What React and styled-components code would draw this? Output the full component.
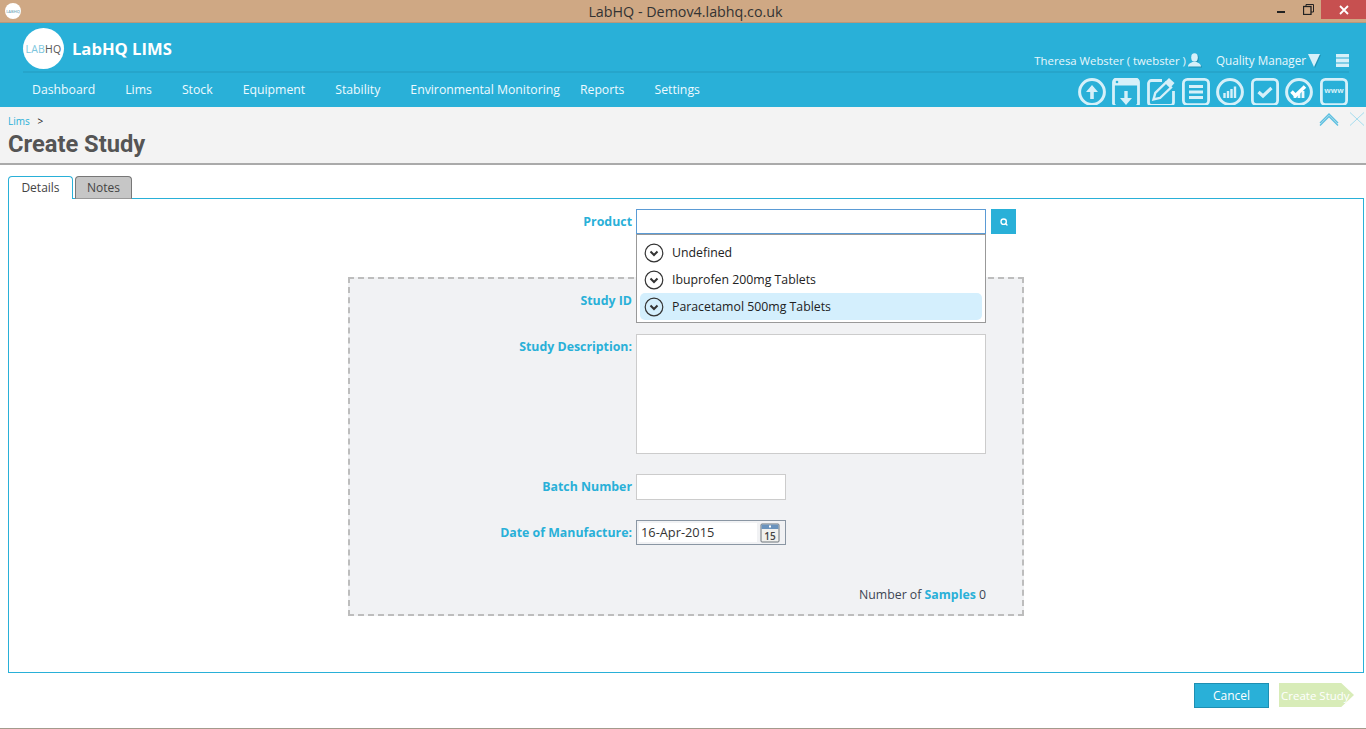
import React from "react";
import styled, { createGlobalStyle } from "styled-components";
import { LuSearch } from "react-icons/lu";

const Global = createGlobalStyle`
  html, body { margin: 0; padding: 0; background: #fff; }
  body { font-family: "Open Sans", "Noto Sans", sans-serif; font-size: 12.5px; color: #333; overflow: hidden; }
  * { box-sizing: border-box; }
`;

const NAV = ["Dashboard", "Lims", "Stock", "Equipment", "Stability", "Environmental Monitoring", "Reports", "Settings"];
const PRODUCTS = ["Undefined", "Ibuprofen 200mg Tablets", "Paracetamol 500mg Tablets"];
const BLUE = "#29b0d8";
const ICON = "#d6f0f9";

/* toolbar drawings */
const UpIcon = () => (
  <svg width="28" height="28" viewBox="0 0 28 28" fill="none" stroke={ICON}>
    <circle cx="14" cy="14" r="12.4" strokeWidth="3" />
    <path d="M14 21v-12" strokeWidth="3.600" />
    <path d="M8 14l6-7 6 7z" fill={ICON} stroke="none" />
  </svg>
);
const DownloadIcon = () => (
  <svg width="28" height="28" viewBox="0 0 28 28" fill="none" stroke={ICON}>
    <path d="M1.500 26V4a3 3 0 0 1 3-3h19a3 3 0 0 1 3 3v22a3 3 0 0 1-2 2M3.500 28a3 3 0 0 1-2-2" strokeWidth="2.800" />
    <path d="M2 2h24v5.500H2z" fill={ICON} stroke="none" />
    <circle cx="5" cy="4" r="1.300" fill={BLUE} stroke="none" />
    <path d="M14 13v9" strokeWidth="3.400" />
    <path d="M8 20h12l-6 7z" fill={ICON} stroke="none" />
  </svg>
);
const EditIcon = () => (
  <svg width="28" height="28" viewBox="0 0 28 28" fill="none" stroke={ICON}>
    <path d="M15 2.500H4.500a3 3 0 0 0-3 3v19a3 3 0 0 0 3 3h19a3 3 0 0 0 3-3V13" strokeWidth="2.800" />
    <path d="M6.500 21.500l1.800-6.500L19 4.500l5 5L13 20z" strokeWidth="2.400" />
    <path d="M18 4l5.500 5.500 4-4.500L22 0z" fill={ICON} stroke="none" />
  </svg>
);
const ListIcon = () => (
  <svg width="28" height="28" viewBox="0 0 28 28" fill="none" stroke={ICON}>
    <rect x="1.400" y="1.400" width="25.200" height="25.200" rx="4" strokeWidth="2.800" />
    <path d="M7 8.500h14M7 14h14M7 19.500h14" strokeWidth="2.800" />
  </svg>
);
const ChartIcon = () => (
  <svg width="28" height="28" viewBox="0 0 28 28" fill="none" stroke={ICON}>
    <circle cx="14" cy="14" r="12.400" strokeWidth="3" />
    <path d="M8.500 20v-5M12 20v-7M15.500 20v-9M19 20V8.500" strokeWidth="2.400" />
  </svg>
);
const CheckIcon = () => (
  <svg width="28" height="28" viewBox="0 0 28 28" fill="none" stroke={ICON}>
    <rect x="1.400" y="1.400" width="25.200" height="25.200" rx="4" strokeWidth="2.800" />
    <path d="M7.500 14l4.500 4 8.500-8" strokeWidth="3.200" />
  </svg>
);
const ChartCheckIcon = () => (
  <svg width="28" height="28" viewBox="0 0 28 28" fill="none" stroke={ICON}>
    <circle cx="14" cy="14" r="12.400" strokeWidth="3" />
    <path d="M10 20v-5M14 20v-5M18 20v-7" stroke="#eef9fd" strokeWidth="2.800" />
    <path d="M6.500 13.500l4 4 9.500-9" stroke="#fff" strokeWidth="3.600" />
  </svg>
);
const WwwIcon = () => (
  <svg width="28" height="28" viewBox="0 0 28 28" fill="none" stroke={ICON}>
    <rect x="1.400" y="1.400" width="25.200" height="25.200" rx="4" strokeWidth="2.800" />
    <text x="14" y="14.500" textAnchor="middle" fontSize="7.500" fontWeight="700" fontFamily="Open Sans" fill={ICON} stroke="none">www</text>
  </svg>
);
const TOOLS = [UpIcon, DownloadIcon, EditIcon, ListIcon, ChartIcon, CheckIcon, ChartCheckIcon, WwwIcon];

const Chevron = () => (
  <svg width="20" height="20" viewBox="0 0 20 20" fill="none" stroke="#333">
    <circle cx="10" cy="10" r="8.800" strokeWidth="1.200" />
    <path d="M6.500 8.500 10 12l3.500-3.500" strokeWidth="2" />
  </svg>
);

const Calendar = () => (
  <svg width="20" height="20" viewBox="0 0 20 20">
    <rect x="1" y="1" width="18" height="18" rx="1" fill="#f1f1ee" stroke="#6d747b" />
    <rect x="1.500" y="1.500" width="17" height="4.500" fill="#6a93bd" />
    <rect x="9" y="2.500" width="2" height="2" fill="#fff" />
    <text x="10" y="16.500" textAnchor="middle" fontSize="10" fontWeight="600" fontFamily="Open Sans" fill="#444">15</text>
  </svg>
);

const Person = () => (
  <svg width="13" height="14" viewBox="0 0 13 14" fill={ICON}>
    <ellipse cx="6.500" cy="4.500" rx="3.300" ry="4.200" />
    <path d="M0 13.500c0-3 3-3.500 4.500-4.500h4c1.500 1 4.500 1.500 4.500 4.500z" />
  </svg>
);

const TitleBar = styled.div`
  height: 23px;
  flex: none;
  background: #cfa884;
  border-bottom: 1px solid #b8977a;
  display: grid;
  grid-template-columns: 1fr auto 1fr;
  align-items: center;
  color: #333;
  font-size: 14.3px;
  padding-left: 5px;
`;

const AppBadge = styled.div`
  width: 16px;
  height: 16px;
  border-radius: 50%;
  background: #fff;
  color: #7ab;
  font-size: 4px;
  font-weight: 600;
  display: flex;
  align-items: center;
  justify-content: center;
`;

const WindowButtons = styled.div`
  justify-self: end;
  align-self: start;
  display: flex;
  align-items: flex-start;
`;

const WinButton = styled.div`
  width: ${(p) => p.$w}px;
  height: 19px;
  display: flex;
  align-items: center;
  justify-content: center;
  background: ${(p) => p.$bg || "transparent"};
`;

const Header = styled.header`
  height: 84px;
  flex: none;
  background: ${BLUE};
  padding: 0 17px 0 23px;
  display: flex;
  flex-direction: column;
  color: #fff;
`;

const HeaderTop = styled.div`
  height: 50px;
  flex: none;
  border-bottom: 2px solid #26a5cb;
  display: flex;
  justify-content: space-between;
`;

const Brand = styled.div`
  display: flex;
  align-items: flex-start;
  gap: 8px;
  padding-top: 5px;
`;

const Logo = styled.div`
  width: 41px;
  height: 41px;
  border-radius: 50%;
  background: #fff;
  display: flex;
  align-items: center;
  justify-content: center;
  font-size: 10.500px;
  color: #555;
  letter-spacing: 0.2px;
  span { color: #7cc6de; }
`;

const BrandName = styled.div`
  font-size: 16.600px;
  font-weight: 700;
  line-height: 42px;
`;

const UserArea = styled.div`
  display: flex;
  align-items: center;
  padding-top: 26px;
  height: 48px;
  color: #e8f7fc;
`;

const UserName = styled.span`
  display: flex;
  align-items: center;
  gap: 2px;
  margin-right: 15px;
  font-size: 11.350px;
  svg { filter: drop-shadow(1px 1px 0 #2291b3); }
`;

const Role = styled.span`
  display: flex;
  align-items: center;
  gap: 2px;
  margin-right: 16px;
  font-size: 11.700px;
`;

const Triangle = styled.i`
  width: 0;
  height: 0;
  border-left: 6.500px solid transparent;
  border-right: 6.500px solid transparent;
  border-top: 13px solid ${ICON};
  filter: drop-shadow(1px 1px 0 #2291b3);
`;

const Burger = styled.div`
  width: 13px;
  height: 13px;
  background: repeating-linear-gradient(${ICON} 0 3px, #7fcde6 3px 5px);
`;

const HeaderBottom = styled.div`
  flex: 1;
  display: flex;
  justify-content: space-between;
`;

const Nav = styled.nav`
  display: flex;
  gap: 30px;
  padding: 7px 0 0 9px;
`;

const NavLink = styled.a`
  font-size: 12.250px;
  color: #eefaff;
  line-height: 20px;
  margin-left: ${(p) => (p.$close ? "-10px" : "0")};
`;

const Tools = styled.div`
  display: flex;
  gap: 6.600px;
  margin-right: 1px;
  padding-top: 5px;
  overflow: hidden;
  height: 32px;
  svg { display: block; }
`;

const SubHeader = styled.div`
  height: 58px;
  flex: none;
  position: relative;
  background: #f3f3f3;
  border-bottom: 2px solid #aaa;
  padding: 7px 8px 0;
`;

const Crumb = styled.div`
  font-size: 10px;
  line-height: 14px;
  color: ${BLUE};
  b { color: #222; font-weight: 400; margin-left: 5px; }
`;

const PageTitle = styled.h1`
  margin: 2px 0 0;
  font-family: Roboto, "Liberation Sans", sans-serif;
  font-size: 23.700px;
  line-height: 28px;
  font-weight: 700;
  color: #555;
`;

const Collapse = styled.svg`
  position: absolute;
  top: 5px;
  right: 1px;
`;

const Body = styled.main`
  flex: 1;
  padding: 11px 2px 0 8px;
  display: flex;
  flex-direction: column;
`;

const TabRow = styled.div`
  display: flex;
  gap: 2px;
  height: 22px;
  position: relative;
  z-index: 1;
`;

const Tab = styled.div`
  width: ${(p) => p.$w}px;
  height: 23px;
  border: 1px solid ${(p) => (p.$active ? BLUE : "#777")};
  border-bottom: ${(p) => (p.$active ? "none" : "1px solid #999")};
  border-radius: 4px 4px 0 0;
  background: ${(p) => (p.$active ? "#fff" : "#c6c6c6")};
  font-size: 12px;
  line-height: 21px;
  text-align: center;
  color: #444;
`;

const Panel = styled.section`
  height: 475px;
  border: 1px solid ${BLUE};
  padding-top: 10px;
`;

const Form = styled.div`
  width: 676px;
  margin: 0 auto;
`;

const Row = styled.div`
  display: grid;
  grid-template-columns: ${(p) => p.$label}px 350px auto;
  column-gap: 4px;
  align-items: start;
  position: relative;
  margin-bottom: ${(p) => p.$after || 0}px;
`;

const Label = styled.label`
  height: 24px;
  text-align: right;
  font-size: 12.350px;
  font-weight: 700;
  color: ${BLUE};
  line-height: 26px;
`;

const Box = styled.div`
  height: ${(p) => p.$h}px;
  width: ${(p) => p.$w || 350}px;
  background: #fff;
  border: 1px solid ${(p) => p.$border || "#ccc"};
`;

const SearchButton = styled.button`
  width: 25px;
  height: 25px;
  margin-left: 1px;
  border: none;
  padding: 0;
  background: ${BLUE};
  color: #fff;
  display: flex;
  align-items: center;
  justify-content: center;
`;

const Dropdown = styled.ul`
  position: absolute;
  top: 25px;
  left: 288px;
  z-index: 2;
  width: 350px;
  height: 89px;
  margin: 0;
  padding: 4px 3px 0;
  list-style: none;
  background: #fff;
  border: 1px solid #999;
`;

const Option = styled.li`
  height: 27px;
  display: flex;
  align-items: center;
  gap: 8px;
  padding-left: 4px;
  border-radius: 5px;
  font-size: 12.300px;
  color: #222;
  background: ${(p) => (p.$selected ? "#d4effd" : "transparent")};
`;

const Fieldset = styled.div`
  height: 339px;
  margin-top: 43px;
  padding-top: 9px;
  border: 2px dashed #bdbdbd;
  background: #f1f2f4;
`;

const DateField = styled.div`
  width: 150px;
  height: 25px;
  display: flex;
  align-items: center;
  justify-content: space-between;
  padding: 2px 5px 2px 2px;
  background: #f1f2f4;
  border: 1px solid #8a96a3;
`;

const DateText = styled.div`
  flex: 1;
  height: 100%;
  margin-right: 3px;
  padding-left: 2px;
  background: #fff;
  font-size: 12.800px;
  line-height: 19px;
  color: #333;
`;

const Samples = styled.div`
  margin-top: 41px;
  padding-right: 36px;
  text-align: right;
  font-size: 12.300px;
  line-height: 18px;
  color: #3d4553;
  b { color: ${BLUE}; }
`;

const Actions = styled.div`
  display: flex;
  justify-content: flex-end;
  align-items: flex-start;
  gap: 10px;
  padding: 10px 10px 0 0;
`;

const CancelButton = styled.button`
  width: 75px;
  height: 25px;
  padding: 0;
  background: ${BLUE};
  border: 1px solid #1e8fb2;
  color: #fff;
  font: 12px "Open Sans", sans-serif;
`;

const CreateButton = styled.button`
  width: 75px;
  height: 24px;
  padding: 0 0 0 2px;
  text-align: left;
  border: none;
  background: #d8ecb8;
  color: #fff;
  font: 11.500px "Open Sans", sans-serif;
  white-space: nowrap;
  clip-path: polygon(0 0, 83% 0, 100% 50%, 83% 100%, 0 100%);
`;

const Page = styled.div`
  height: 729px;
  display: flex;
  flex-direction: column;
  border-bottom: 1px solid #a39a8c;
`;

export default function App() {
  return (
    <Page>
      <Global />
      <TitleBar>
        <AppBadge>LABHQ</AppBadge>
        <span>LabHQ - Demov4.labhq.co.uk</span>
        <WindowButtons>
          <WinButton $w={30}>
            <svg width="8" height="8" viewBox="0 0 8 8"><path d="M0 6h8" stroke="#222" strokeWidth="2" /></svg>
          </WinButton>
          <WinButton $w={25}>
            <svg width="11" height="11" viewBox="0 0 11 11" fill="none" stroke="#222">
              <path d="M3 2.500V.500h7.500V8H8" />
              <rect x=".500" y="2.500" width="7.500" height="8" strokeWidth="1.300" />
            </svg>
          </WinButton>
          <WinButton $w={45} $bg="#c75050">
            <svg width="10" height="10" viewBox="0 0 10 10"><path d="M1 1l8 8M9 1l-8 8" stroke="#fff" strokeWidth="1.800" /></svg>
          </WinButton>
        </WindowButtons>
      </TitleBar>

      <Header>
        <HeaderTop>
          <Brand>
            <Logo><span>LAB</span>HQ</Logo>
            <BrandName>LabHQ LIMS</BrandName>
          </Brand>
          <UserArea>
            <UserName>Theresa Webster ( twebster ) <Person /></UserName>
            <Role>Quality Manager <Triangle /></Role>
            <Burger />
          </UserArea>
        </HeaderTop>
        <HeaderBottom>
          <Nav>
            {NAV.map((n) => (
              <NavLink key={n} $close={n === "Reports"}>{n}</NavLink>
            ))}
          </Nav>
          <Tools>
            {TOOLS.map((Icon, i) => <Icon key={i} />)}
          </Tools>
        </HeaderBottom>
      </Header>

      <SubHeader>
        <Crumb>Lims <b>&gt;</b></Crumb>
        <PageTitle>Create Study</PageTitle>
        <Collapse width="46" height="14" viewBox="0 0 46 14" fill="none" strokeWidth="1">
          <path d="M1 11 10 2l9 9M1 13.500 10 4.500l9 9" stroke="#5bbfe0" strokeWidth="1.400" />
          <path d="M31 .500 45 13.500M45 .500 31 13.500" stroke="#a5dcee" />
        </Collapse>
      </SubHeader>

      <Body>
        <TabRow>
          <Tab $w={65} $active>Details</Tab>
          <Tab $w={57}>Notes</Tab>
        </TabRow>
        <Panel>
          <Form>
            <Row $label={284}>
              <Label>Product</Label>
              <Box $h={25} $border="#5b9bd5" />
              <SearchButton><LuSearch size={8} strokeWidth={4} /></SearchButton>
              <Dropdown>
                {PRODUCTS.map((p, i) => (
                  <Option key={p} $selected={i === 2}>
                    <Chevron />
                    {p}
                  </Option>
                ))}
              </Dropdown>
            </Row>
            <Fieldset>
              <Row $label={282} $after={20}>
                <Label>Study ID</Label>
                <Box $h={26} />
              </Row>
              <Row $label={282} $after={20}>
                <Label>Study Description:</Label>
                <Box $h={120} />
              </Row>
              <Row $label={282} $after={20}>
                <Label>Batch Number</Label>
                <Box $h={26} $w={150} />
              </Row>
              <Row $label={282}>
                <Label>Date of Manufacture:</Label>
                <DateField>
                  <DateText>16-Apr-2015</DateText>
                  <Calendar />
                </DateField>
              </Row>
              <Samples>Number of <b>Samples</b> 0</Samples>
            </Fieldset>
          </Form>
        </Panel>
        <Actions>
          <CancelButton>Cancel</CancelButton>
          <CreateButton>Create Study</CreateButton>
        </Actions>
      </Body>
    </Page>
  );
}
